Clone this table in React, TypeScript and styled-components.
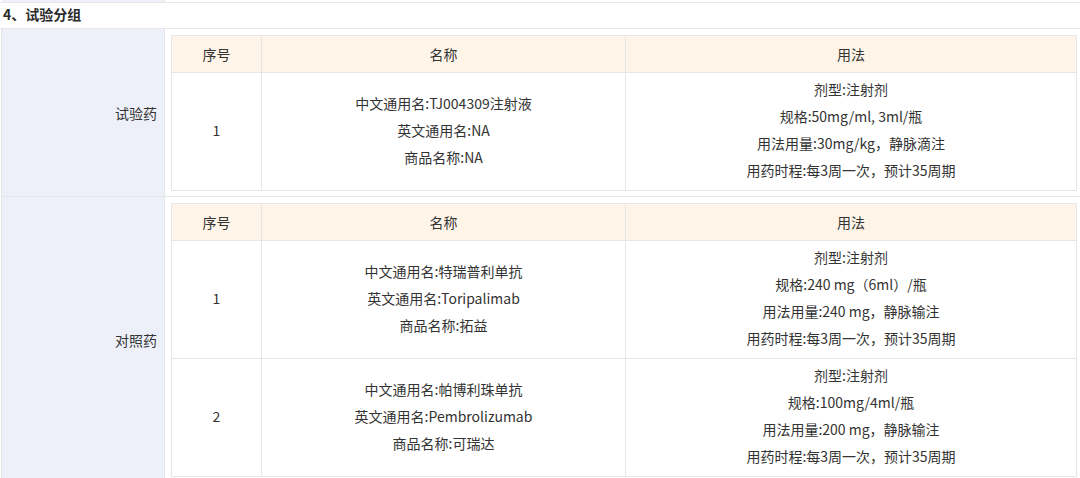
import React from "react";
import styled, { createGlobalStyle } from "styled-components";

const GlobalStyle = createGlobalStyle`
  html, body {
    margin: 0;
    padding: 0;
    background: #ffffff;
    overflow: hidden;
  }
  body {
    font-family: "Noto Sans CJK SC", "Microsoft YaHei", sans-serif;
    color: #333333;
    font-size: 14px;
  }
`;

const BORDER = "#e6e6e6";

interface Drug {
  no: string;
  names: string[];
  usage: string[];
}

interface Group {
  label: string;
  drugs: Drug[];
}

const groups: Group[] = [
  {
    label: "试验药",
    drugs: [
      {
        no: "1",
        names: [
          "中文通用名:TJ004309注射液",
          "英文通用名:NA",
          "商品名称:NA",
        ],
        usage: [
          "剂型:注射剂",
          "规格:50mg/ml, 3ml/瓶",
          "用法用量:30mg/kg，静脉滴注",
          "用药时程:每3周一次，预计35周期",
        ],
      },
    ],
  },
  {
    label: "对照药",
    drugs: [
      {
        no: "1",
        names: [
          "中文通用名:特瑞普利单抗",
          "英文通用名:Toripalimab",
          "商品名称:拓益",
        ],
        usage: [
          "剂型:注射剂",
          "规格:240 mg（6ml）/瓶",
          "用法用量:240 mg，静脉输注",
          "用药时程:每3周一次，预计35周期",
        ],
      },
      {
        no: "2",
        names: [
          "中文通用名:帕博利珠单抗",
          "英文通用名:Pembrolizumab",
          "商品名称:可瑞达",
        ],
        usage: [
          "剂型:注射剂",
          "规格:100mg/4ml/瓶",
          "用法用量:200 mg，静脉输注",
          "用药时程:每3周一次，预计35周期",
        ],
      },
    ],
  },
];

function App() {
  return (
    <>
      <GlobalStyle />
      <Sheet>
        <StubRow>
          <StubLabel />
          <div />
        </StubRow>
        <TitleRow>4、试验分组</TitleRow>
        {groups.map((group) => (
          <GroupRow key={group.label}>
            <LabelCell>{group.label}</LabelCell>
            <ContentCell>
              <DrugTable>
                <colgroup>
                  <col style={{ width: 90 }} />
                  <col style={{ width: 364 }} />
                  <col />
                </colgroup>
                <thead>
                  <tr>
                    <HeadCell>序号</HeadCell>
                    <HeadCell>名称</HeadCell>
                    <HeadCell>用法</HeadCell>
                  </tr>
                </thead>
                <tbody>
                  {group.drugs.map((drug) => (
                    <tr key={drug.no}>
                      <BodyCell>{drug.no}</BodyCell>
                      <BodyCell>
                        {drug.names.map((line) => (
                          <Line key={line}>{line}</Line>
                        ))}
                      </BodyCell>
                      <BodyCell>
                        {drug.usage.map((line) => (
                          <Line key={line}>{line}</Line>
                        ))}
                      </BodyCell>
                    </tr>
                  ))}
                </tbody>
              </DrugTable>
            </ContentCell>
          </GroupRow>
        ))}
      </Sheet>
    </>
  );
}

const Sheet = styled.div`
  width: 1081px;
  margin-left: 2px;
`;

const StubRow = styled.div`
  display: grid;
  grid-template-columns: 163px 1fr;
  height: 2px;
  overflow: hidden;
  border-bottom: 1px solid ${BORDER};
  margin-left: -2px;
  padding-left: 2px;
`;

const StubLabel = styled.div`
  background: #edf0f9;
  border-right: 1px solid ${BORDER};
`;

const TitleRow = styled.div`
  height: 25px;
  line-height: 23px;
  padding-left: 3px;
  margin-left: -2px;
  font-weight: bold;
  font-size: 14px;
  color: #2b2b2b;
  border-bottom: 1px solid ${BORDER};
`;

const GroupRow = styled.div`
  display: grid;
  grid-template-columns: 163px 1fr;
  border-left: 1px solid ${BORDER};
  border-bottom: 1px solid ${BORDER};
  margin-left: -1px;
`;

const LabelCell = styled.div`
  display: flex;
  align-items: center;
  justify-content: flex-end;
  padding-right: 7px;
  background: #edf0f9;
  border-right: 1px solid ${BORDER};
  font-size: 14px;
  color: #333333;
`;

const ContentCell = styled.div`
  padding: 6px 3px 5px 6px;
`;

const DrugTable = styled.table`
  width: 906px;
  border-collapse: collapse;
  table-layout: fixed;
  font-size: 14px;
  color: #333333;
`;

const HeadCell = styled.th`
  height: 35px;
  padding: 0 8px 1px;
  background: #fef4e8;
  border: 1px solid ${BORDER};
  font-weight: normal;
  text-align: center;
  vertical-align: middle;
`;

const BodyCell = styled.td`
  padding: 3px 8px 6px;
  border: 1px solid ${BORDER};
  text-align: center;
  vertical-align: middle;
`;

const Line = styled.div`
  line-height: 27px;
  white-space: nowrap;
`;

export default App;
